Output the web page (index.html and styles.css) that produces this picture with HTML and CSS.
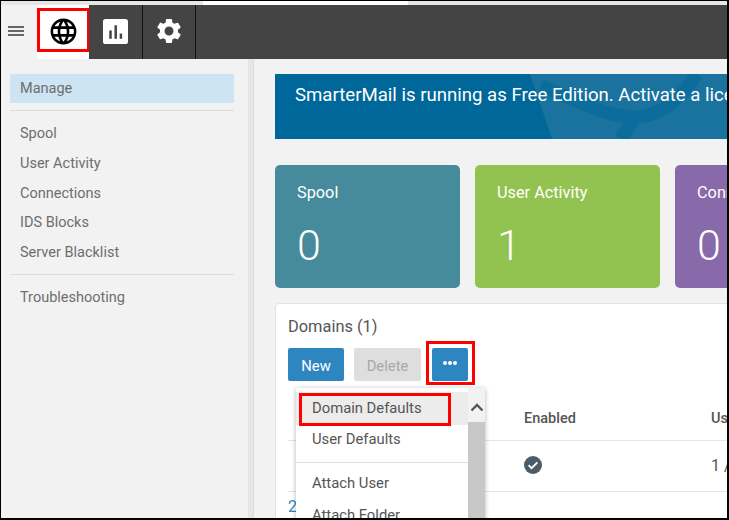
FILE: index.html
```html
<!DOCTYPE html>
<html lang="en">
<head>
<meta charset="utf-8">
<title>SmarterMail</title>
<link rel="stylesheet" href="styles.css">
</head>
<body>
<div class="frame">
  <div class="strip">
    <div class="strip-gray strip-left"></div>
    <div class="strip-white"></div>
    <div class="strip-gray strip-right"></div>
  </div>
  <header class="topbar">
    <div class="burger"><span></span><span></span><span></span></div>
    <div class="tab tab-active">
      <svg class="icon-globe" viewBox="0 0 24 24"><path d="M11.99 2C6.47 2 2 6.48 2 12s4.47 10 9.99 10C17.52 22 22 17.52 22 12S17.52 2 11.99 2zm6.93 6h-2.95c-.32-1.25-.78-2.45-1.38-3.56 1.84.63 3.37 1.91 4.33 3.56zM12 4.04c.83 1.2 1.48 2.53 1.91 3.96h-3.82c.43-1.43 1.08-2.76 1.91-3.96zM4.26 14C4.1 13.36 4 12.69 4 12s.1-1.36.26-2h3.38c-.08.66-.14 1.32-.14 2 0 .68.06 1.34.14 2H4.26zm.82 2h2.95c.32 1.25.78 2.45 1.38 3.56-1.84-.63-3.37-1.9-4.33-3.56zm2.95-8H5.08c.96-1.66 2.49-2.93 4.33-3.56C8.81 5.55 8.35 6.75 8.03 8zM12 19.96c-.83-1.2-1.48-2.53-1.91-3.96h3.82c-.43 1.43-1.08 2.76-1.91 3.96zM14.34 14H9.66c-.09-.66-.16-1.32-.16-2 0-.68.07-1.35.16-2h4.68c.09.65.16 1.32.16 2 0 .68-.07 1.34-.16 2zm.25 5.56c.6-1.11 1.06-2.31 1.38-3.56h2.95c-.96 1.65-2.49 2.93-4.33 3.56zM16.36 14c.08-.66.14-1.32.14-2 0-.68-.06-1.34-.14-2h3.38c.16.64.26 1.31.26 2s-.1 1.36-.26 2h-3.38z"/></svg>
      <div class="redbox redbox-tab"></div>
    </div>
    <div class="tab tab-dark tab-wide">
      <svg class="icon-chart" viewBox="0 0 24 24"><rect x="0" y="0" width="24" height="24" rx="2.5" fill="#fff"/><rect x="6" y="11" width="2.4" height="8" fill="#444"/><rect x="11" y="6" width="2.4" height="13" fill="#444"/><rect x="16" y="14" width="2.4" height="5" fill="#444"/></svg>
    </div>
    <div class="tab tab-dark">
      <svg class="icon-gear" viewBox="0 0 24 24"><path d="M19.14 12.94c.04-.3.06-.61.06-.94 0-.32-.02-.64-.07-.94l2.03-1.58c.18-.14.23-.41.12-.61l-1.92-3.32c-.12-.22-.37-.29-.59-.22l-2.39.96c-.5-.38-1.03-.7-1.62-.94l-.36-2.54c-.04-.24-.24-.41-.48-.41h-3.84c-.24 0-.43.17-.47.41l-.36 2.54c-.59.24-1.13.57-1.62.94l-2.39-.96c-.22-.08-.47 0-.59.22L2.74 8.87c-.12.21-.08.47.12.61l2.03 1.58c-.05.3-.09.63-.09.94s.02.64.07.94l-2.03 1.58c-.18.14-.23.41-.12.61l1.92 3.32c.12.22.37.29.59.22l2.39-.96c.5.38 1.03.7 1.62.94l.36 2.54c.05.24.24.41.48.41h3.84c.24 0 .44-.17.47-.41l.36-2.54c.59-.24 1.13-.56 1.62-.94l2.39.96c.22.08.47 0 .59-.22l1.92-3.32c.12-.22.07-.47-.12-.61l-2.01-1.58zM12 15.6c-1.98 0-3.6-1.62-3.6-3.6s1.62-3.6 3.6-3.6 3.6 1.62 3.6 3.6-1.62 3.6-3.6 3.6z"/></svg>
    </div>
    <div class="topbar-fill"></div>
  </header>
  <div class="content">
    <aside class="sidebar">
      <div class="side-item side-active">Manage</div>
      <div class="side-rule"></div>
      <div class="side-item">Spool</div>
      <div class="side-item">User Activity</div>
      <div class="side-item">Connections</div>
      <div class="side-item">IDS Blocks</div>
      <div class="side-item">Server Blacklist</div>
      <div class="side-rule side-rule-low"></div>
      <div class="side-item">Troubleshooting</div>
    </aside>
    <div class="gutter"></div>
    <main class="main">
      <section class="banner">
        <svg class="banner-art" viewBox="0 0 454 65"><polygon points="255,0 277,65 454,65 454,0" fill="#1a729e"/><path d="M266 12 C 300 25, 330 43, 360 43 C 385 43, 405 25, 422 0" fill="none" stroke="#0c6c9c" stroke-width="13"/><path d="M358 45 L 346 65" fill="none" stroke="#0c6c9c" stroke-width="14"/></svg>
        <p class="banner-text">SmarterMail is running as Free Edition. Activate a license</p>
      </section>
      <section class="cards">
        <div class="card card-teal"><div class="card-title">Spool</div><div class="card-num">0</div></div>
        <div class="card card-green"><div class="card-title">User Activity</div><div class="card-num">1</div></div>
        <div class="card card-purple"><div class="card-title">Connections</div><div class="card-num">0</div></div>
      </section>
      <section class="panel">
        <h2 class="panel-title">Domains (1)</h2>
        <div class="actions">
          <button class="btn btn-blue">New</button>
          <button class="btn btn-gray">Delete</button>
          <button class="btn btn-blue btn-dots"><span class="dots"><i></i><i></i><i></i></span></button>
          <div class="redbox redbox-dots"></div>
        </div>
        <div class="table">
          <div class="row row-head"><div class="col-a"></div><div class="col-b">Enabled</div><div class="col-c">Users</div></div>
          <div class="row row-body"><div class="col-a"></div><div class="col-b"><svg class="icon-check" viewBox="0 0 18 18"><circle cx="9" cy="9" r="9" fill="#4b5c68"/><path d="M4.6 9.2l3 3 5.8-5.8" fill="none" stroke="#fff" stroke-width="1.8"/></svg></div><div class="col-c">1 / 10</div></div>
          <div class="row-foot"><a class="pager">25</a></div>
        </div>
        <div class="menu">
          <div class="menu-list">
            <div class="menu-item menu-item-hover">Domain Defaults</div>
            <div class="menu-item">User Defaults</div>
            <div class="menu-rule"></div>
            <div class="menu-item">Attach User</div>
            <div class="menu-item">Attach Folder</div>
          </div>
          <div class="menu-scroll">
            <div class="menu-arrow"><svg class="icon-chev" viewBox="0 0 14 9"><path d="M1.5 7.5L7 2l5.500 5.500" fill="none" stroke="#555" stroke-width="2.400"/></svg></div>
            <div class="menu-thumb"></div>
          </div>
          <div class="redbox redbox-item"></div>
        </div>
      </section>
    </main>
  </div>
</div>
</body>
</html>
```

FILE: styles.css
```css
* { box-sizing: border-box; }
html, body { margin: 0; padding: 0; width: 729px; height: 520px; overflow: hidden; background: #f2f2f2; }
body { font-family: Roboto, "Liberation Sans", sans-serif; color: #555; }

.frame {
  width: 729px; height: 520px;
  border-top: 1px solid #000; border-left: 1px solid #000;
  border-right: 2px solid #000; border-bottom: 2px solid #000;
  display: flex; flex-direction: column; overflow: hidden;
}

.strip { height: 4px; display: flex; flex: none; }
.strip-gray { background: #e6e6e6; }
.strip-left { width: 202px; }
.strip-white { width: 205px; background: #fff; }
.strip-right { flex: 1; }

.topbar { height: 54px; flex: none; display: flex; background: #f2f2f2; }
.burger { width: 36px; display: flex; flex-direction: column; gap: 2px; padding: 21px 0 0 7px; }
.burger span { display: block; width: 16px; height: 2px; background: #666; }
.tab { width: 53px; display: flex; align-items: center; justify-content: center; position: relative; padding-bottom: 2px; }
.tab-active { width: 52px; background: #fff; }
.tab-dark { background: #444; border-right: 1px solid #111; }
.tab-wide { width: 54px; }
.topbar-fill { flex: 1; background: #444; }
.icon-globe { width: 31px; height: 31px; fill: #000; }
.icon-chart { width: 25px; height: 25px; }
.icon-gear { width: 30px; height: 30px; fill: #fff; }

.redbox { position: absolute; border: 3px solid #f00; }
.redbox-tab { left: 0; top: 3px; width: 53px; height: 44px; }
.redbox-dots { left: 138px; top: -7px; width: 49px; height: 44px; }
.redbox-item { left: 3px; top: 5px; width: 152px; height: 33px; }

.content { flex: 1; min-height: 0; display: flex; }
.sidebar { width: 247px; flex: none; padding: 15px 14px 0 9px; background: #f2f2f2; }
.side-item { height: 29.75px; line-height: 32px; padding-left: 10px; font-size: 14.5px; color: #6e6e6e; }
.side-active { height: 29px; line-height: 29px; background: #cde4f3; }
.side-rule { height: 1px; background: #dcdcdc; margin: 7px 0 7px; }
.side-rule-low { margin: 7px 0 7.25px; }
.gutter { width: 6px; flex: none; background: #e6e6e6; border-right: 1px solid #dcdcdc; }

.main { flex: 1; min-width: 0; overflow: hidden; padding: 15px 0 0 21px; background: #f2f2f2; }

.banner { position: relative; width: 454px; height: 65px; background: #00679a; overflow: hidden; }
.banner-art { position: absolute; left: 0; top: 0; width: 454px; height: 65px; }
.banner-text { position: relative; margin: 0; padding: 8px 0 0 20px; font-size: 18.6px; line-height: 26px; color: #fff; white-space: nowrap; }

.cards { display: flex; gap: 15px; margin-top: 26px; width: 600px; }
.card { width: 185px; height: 123px; flex: none; border-radius: 5px; padding: 18px 22px; color: #fff; }
.card-teal { background: #458b9b; }
.card-green { background: #92c24f; }
.card-purple { background: #8869aa; }
.card-title { font-size: 16.3px; line-height: 20px; }
.card-num { margin-top: 17px; font-size: 43px; line-height: 50px; font-weight: 350; }

.panel {
  position: relative; width: 520px; height: 260px; margin-top: 15px;
  background: #fff; border: 1px solid #e2e2e2; border-radius: 4px; padding: 13px 0 0 12px;
}
.panel-title { margin: 0; font-size: 16.400px; font-weight: 400; line-height: 20px; color: #555; }
.actions { position: relative; display: flex; gap: 10px; margin-top: 11px; height: 33px; }
.btn { height: 33px; border: 0; border-radius: 2px; padding: 3px 0 0; font-family: inherit; font-size: 14.8px; }
.btn-blue { background: #2e86c1; color: #fff; width: 56px; }
.btn-gray { background: #dedede; color: #a8a8a8; width: 67px; }
.btn-dots { width: 36px; margin-left: 1px; display: flex; align-items: center; justify-content: center; padding: 0; }
.dots { display: flex; gap: 1px; margin-top: -3px; }
.dots i { display: block; width: 4px; height: 4px; border-radius: 50%; background: #fff; }

.table { margin: 27px -1px 0 0; }
.row { display: grid; grid-template-columns: 236px 187px 1fr; align-items: center; border-bottom: 1px solid #e6e6e6; }
.row-head { height: 33px; padding-bottom: 12px; font-size: 14.5px; font-weight: 500; color: #555; }
.row-body { height: 51px; padding-bottom: 2px; font-size: 16px; color: #555; }
.col-b { display: flex; align-items: center; }
.icon-check { width: 18px; height: 18px; }
.row-foot { padding-top: 6px; font-size: 16px; line-height: 18px; }
.pager { color: #2e86c1; }

.menu {
  position: absolute; left: 20px; top: 84px; width: 189px; height: 150px;
  background: #fff; display: flex; box-shadow: 0 1px 5px rgba(0,0,0,.3); border-radius: 2px;
}
.menu-list { flex: 1; padding-top: 4px; }
.menu-item { height: 31px; line-height: 29px; padding-left: 16px; font-size: 14.8px; color: #555; }
.menu-item-hover { height: 33px; background: #ececec; line-height: 33px; }
.menu-rule { height: 1px; background: #dedede; margin: 6px 0 5px; }
.menu-rule + .menu-item { height: 33px; line-height: 30px; }
.menu-scroll { width: 17px; display: flex; flex-direction: column; background: #c8c8c8; }
.menu-arrow { height: 34px; background: #f2f2f2; display: flex; align-items: center; justify-content: center; padding-top: 5px; }
.menu-thumb { flex: 1; }
.icon-chev { width: 14px; height: 9px; }
```
